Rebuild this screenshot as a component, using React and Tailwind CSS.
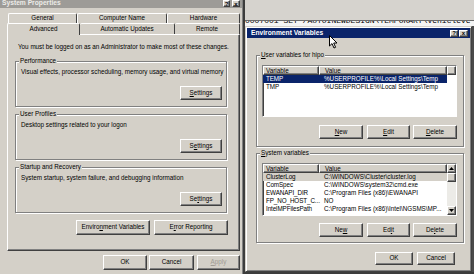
import React from "react";

const raised =
  "border border-t-white border-l-white border-r-[#404040] border-b-[#404040] shadow-[inset_-1px_-1px_0_#808080]";
const sunken =
  "border border-t-[#808080] border-l-[#808080] border-r-white border-b-white shadow-[inset_1px_1px_0_#404040]";

function Btn({ children, w, h = "h-[14px]", disabled }) {
  return (
    <div
      className={`${raised} ${w} ${h} bg-[#d4d0c8] flex items-center justify-center leading-none shrink-0 ${
        disabled ? "text-[#a09c94]" : "text-black"
      }`}
    >
      <span>{children}</span>
    </div>
  );
}

function Group({ label, children, className = "" }) {
  return (
    <fieldset
      className={`min-w-0 border border-[#808080] shadow-[inset_1px_1px_0_#fff,1px_1px_0_#fff] ${className}`}
    >
      <legend className="ml-[3px] px-[1px] leading-[8px] bg-[#d4d0c8]">{label}</legend>
      <div className="flex flex-col">{children}</div>
    </fieldset>
  );
}

function Arrow({ up }) {
  return (
    <div className={`${raised} h-[9px] bg-[#d4d0c8] flex items-center justify-center`}>
      <svg width="5" height="3" viewBox="0 0 5 3">
        {up ? <polygon points="2.5,0 5,3 0,3" fill="#000" /> : <polygon points="0,0 5,0 2.5,3" fill="#000" />}
      </svg>
    </div>
  );
}

function TitleBtn({ children, w }) {
  return (
    <div className={`${raised} ${w} h-[7px] bg-[#d4d0c8] text-black flex items-center justify-center text-[6px] font-bold leading-none`}>
      {children}
    </div>
  );
}

function ListHeader({ extra }) {
  return (
    <div className="flex h-[9px] shrink-0">
      <div className={`${raised} w-[56px] pl-[2px] leading-[7px] bg-[#d4d0c8]`}>Variable</div>
      <div className={`${raised} w-[128px] pl-[5px] leading-[7px] bg-[#d4d0c8]`}>Value</div>
      {extra && <div className={`${raised} flex-1 bg-[#d4d0c8]`} />}
    </div>
  );
}

function Row({ name, value, sel }) {
  const bg = sel === "active" ? "bg-[#0a246a] text-white" : sel === "gray" ? "bg-[#d4d0c8]" : "";
  return (
    <div className={`flex w-[184px] h-[8px] leading-[8px] whitespace-nowrap ${bg}`}>
      <div className="w-[56px] shrink-0 pl-[3px] tracking-[-0.1px]">{name}</div>
      <div className="w-[128px] shrink-0 pl-[5px] overflow-hidden">{value}</div>
    </div>
  );
}

const userVars = [
  ["TEMP", "%USERPROFILE%\\Local Settings\\Temp", "active"],
  ["TMP", "%USERPROFILE%\\Local Settings\\Temp"],
];

const sysVars = [
  ["ClusterLog", "C:\\WINDOWS\\Cluster\\cluster.log", "gray"],
  ["ComSpec", "C:\\WINDOWS\\system32\\cmd.exe"],
  ["EWANAPI_DIR", "C:\\Program Files (x86)\\EWANAPI"],
  ["FP_NO_HOST_C...", "NO"],
  ["IntelMPFilesPath", "C:\\Program Files (x86)\\Intel\\NGSMS\\MP..."],
];

export default function App() {
  return (
    <div className="relative w-[474px] h-[274px] overflow-hidden flex bg-[#d4d0c8] text-black text-[6.3px] leading-[8px] font-['Liberation_Sans',Arial,sans-serif]">
      {/* System Properties */}
      <div className="w-[243px] h-[274px] shrink-0 border-r border-r-[#808080] flex flex-col">
        <div className="h-[8px] bg-[#9d9b97] flex items-start justify-between pr-[2px]">
          <span className="pl-[2px] text-[#ecebe8] font-bold text-[6.7px] leading-[6px]">System Properties</span>
          <div className="flex gap-[2px]">
            <TitleBtn w="w-[7px]">?</TitleBtn>
            <TitleBtn w="w-[8px]">x</TitleBtn>
          </div>
        </div>

        <div className="flex ml-[8px] mt-[5px] h-[10px]">
          {[
            ["General", "w-[69px]"],
            ["Computer Name", "w-[90px]"],
            ["Hardware", "w-[73px]"],
          ].map(([t, w]) => (
            <div
              key={t}
              className={`${w} border-t border-l border-r border-t-white border-l-white border-r-[#404040] rounded-t-[2px] flex items-center justify-center leading-none`}
            >
              {t}
            </div>
          ))}
        </div>
        <div className="flex ml-[7px] h-[11px]">
          <div className="relative z-10 w-[73px] h-[12px] bg-[#d4d0c8] border-t border-l border-r border-t-white border-l-white border-r-[#404040] rounded-t-[2px] flex items-center justify-center leading-none">
            Advanced
          </div>
          <div className="w-[95px] border-t border-r border-t-white border-r-[#404040] rounded-t-[2px] flex items-center justify-center leading-none">
            Automatic Updates
          </div>
          <div className="w-[65px] border-t border-r border-t-white border-r-[#404040] rounded-t-[2px] flex items-center justify-center leading-none">
            Remote
          </div>
        </div>

        <div className={`ml-[7px] w-[233px] h-[217px] shrink-0 ${raised} flex flex-col px-[7px]`}>
          <div className="mt-[8px] ml-[3px] whitespace-nowrap">
            You must be logged on as an Administrator to make most of these changes.
          </div>

          {[
            ["Performance", "Visual effects, processor scheduling, memory usage, and virtual memory", <><u>S</u>ettings</>, "mt-[6px]"],
            ["User Profiles", "Desktop settings related to your logon", <>S<u>e</u>ttings</>, "mt-[3px]"],
            ["Startup and Recovery", "System startup, system failure, and debugging information", <>Se<u>t</u>tings</>, "mt-[3px]"],
          ].map(([label, desc, btn, mt]) => (
            <Group key={label} label={label} className={`w-[212px] ${mt}`}>
              <div className="mt-[3px] ml-[5px] whitespace-nowrap">{desc}</div>
              <div className="self-end mr-[4px] mt-[10px] mb-[6px]">
                <Btn w="w-[42px]">{btn}</Btn>
              </div>
            </Group>
          ))}

          <div className="flex mt-[7px] ml-[61px] gap-[4px]">
            <Btn w="w-[74px]" h="h-[15px]">Enviro<u>n</u>ment Variables</Btn>
            <Btn w="w-[74px]" h="h-[15px]">E<u>r</u>ror Reporting</Btn>
          </div>
        </div>

        <div className="flex justify-end mt-[4px] pr-[2px]">
          <Btn w="w-[44px]" h="h-[15px]">OK</Btn>
          <div className="ml-[2px]">
            <Btn w="w-[45px]" h="h-[15px]">Cancel</Btn>
          </div>
          <div className="ml-[3px]">
            <Btn w="w-[43px]" h="h-[15px]" disabled>
              <u>A</u>pply
            </Btn>
          </div>
        </div>
      </div>

      <div className="w-[2px] shrink-0 bg-[#3c3c3c]" />

      {/* right side: window behind + Environment Variables */}
      <div className="w-[229px] shrink-0 flex flex-col">
        <div className="h-[20px] bg-[#d6d3ce]" />
        <div className="h-[6px] bg-[#f4f4f4] border-t border-t-[#6a6a6a] overflow-hidden">
          <div className="-mt-[5px] font-['Liberation_Mono',monospace] text-[8px] leading-[9px] whitespace-nowrap">
            0007001 SET /AUTOINEWDESIGN\TEMPORARY\vehicleve
          </div>
        </div>

        <div className="flex">
          <div className="w-[227px] h-[246px] overflow-hidden border border-t-[#d4d0c8] border-l-[#d4d0c8] border-r-[#404040] border-b-[#404040] shadow-[inset_1px_1px_0_#fff,inset_-1px_-1px_0_#808080] p-[1px] flex flex-col">
            <div className="h-[10px] shrink-0 bg-[#0a246a] flex items-center justify-between pl-[4px] pr-[2px]">
              <span className="text-white font-bold text-[6.7px] leading-none">Environment Variables</span>
              <div className="flex gap-[1px]">
                <TitleBtn w="w-[8px]">?</TitleBtn>
                <TitleBtn w="w-[9px]">x</TitleBtn>
              </div>
            </div>

            <Group label={<><u>U</u>ser variables for hipo</>} className="ml-[9px] mt-[13px] w-[208px]">
              <div className={`${sunken} ml-[5px] mt-[6px] w-[195px] h-[52px] bg-white flex flex-col overflow-hidden`}>
                <ListHeader extra />
                {userVars.map(([n, v, s]) => (
                  <Row key={n} name={n} value={v} sel={s} />
                ))}
              </div>
              <div className="flex justify-end mr-[6px] mt-[8px] mb-[7px]">
                <Btn w="w-[44px]"><u>N</u>ew</Btn>
                <div className="ml-[4px]"><Btn w="w-[43px]"><u>E</u>dit</Btn></div>
                <div className="ml-[3px]"><Btn w="w-[44px]"><u>D</u>elete</Btn></div>
              </div>
            </Group>

            <Group label={<><u>S</u>ystem variables</>} className="ml-[9px] mt-[2px] w-[208px]">
              <div className={`${sunken} ml-[5px] mt-[6px] w-[195px] h-[53px] bg-white flex overflow-hidden`}>
                <div className="flex flex-col w-[184px]">
                  <ListHeader />
                  {sysVars.map(([n, v, s]) => (
                    <Row key={n} name={n} value={v} sel={s} />
                  ))}
                </div>
                <div className="flex-1 flex flex-col">
                  <Arrow up />
                  <div className={`${raised} h-[9px] bg-[#d4d0c8]`} />
                  <div className="flex-1 bg-[#ecebe7]" />
                  <Arrow />
                </div>
              </div>
              <div className="flex justify-end mr-[6px] mt-[7px] mb-[5px]">
                <Btn w="w-[44px]">Ne<u>w</u></Btn>
                <div className="ml-[4px]"><Btn w="w-[43px]">Ed<u>i</u>t</Btn></div>
                <div className="ml-[3px]"><Btn w="w-[44px]">De<u>l</u>ete</Btn></div>
              </div>
            </Group>

            <div className="flex justify-end gap-[4px] mr-[15px] mt-[9px]">
              <Btn w="w-[38px]" h="h-[13px]">OK</Btn>
              <Btn w="w-[38px]" h="h-[13px]">Cancel</Btn>
            </div>
          </div>
          <div className="w-[2px] bg-[#4a4a4a]" />
        </div>
        <div className="flex-1 bg-[#3c3c3c]" />
      </div>

      {/* mouse pointer */}
      <svg className="absolute left-[329px] top-[35px]" width="9" height="14" viewBox="0 0 9 14">
        <path d="M0.5 0.5 L0.5 11 L3 8.6 L5 13 L6.6 12.3 L4.7 8 L8 8 Z" fill="#fff" stroke="#000" strokeWidth="1" strokeLinejoin="miter" />
      </svg>
    </div>
  );
}
